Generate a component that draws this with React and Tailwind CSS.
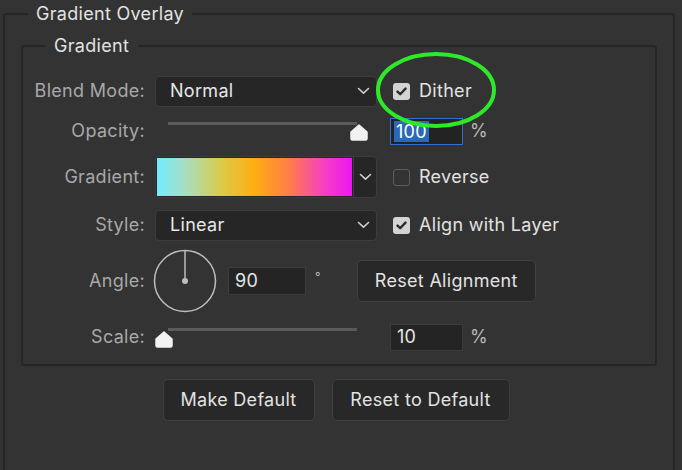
import React from "react";

const Chevron = () => (
  <svg width="13" height="8" viewBox="0 0 13 8" fill="none">
    <path d="M1.5 1.5 L6.5 6.2 L11.5 1.5" stroke="#cfcfcf" strokeWidth="1.6" strokeLinecap="round" strokeLinejoin="round" />
  </svg>
);

const Check = ({ checked }) =>
  checked ? (
    <span className="flex h-[17px] w-[17px] items-center justify-center rounded-[3px] bg-[#d4d4d4]">
      <svg width="11" height="9" viewBox="0 0 11 9" fill="none">
        <path d="M1.5 4.6 L4.2 7.2 L9.5 1.6" stroke="#2e2e2e" strokeWidth="2.4" strokeLinecap="round" strokeLinejoin="round" />
      </svg>
    </span>
  ) : (
    <span className="block h-[17px] w-[17px] rounded-[3px] border-[1.5px] border-[#5e5e5e]" />
  );

const Handle = () => (
  <svg width="18" height="17" viewBox="0 0 18 17">
    <path d="M9 1 L17 8 L17 14.5 Q17 16 15.5 16 L2.5 16 Q1 16 1 14.5 L1 8 Z" fill="#f2f2f2" stroke="#f2f2f2" strokeWidth="1.5" strokeLinejoin="round" />
  </svg>
);

const Select = ({ value }) => (
  <div className="flex h-[31px] w-[222px] items-center justify-between rounded-[4px] border border-[#3d3d3d] bg-[#262626] pl-[14px] pr-[6px] text-[#e6e6e6]">
    <span>{value}</span>
    <Chevron />
  </div>
);

const Row = ({ label, h, children }) => (
  <div className="flex items-center" style={{ height: h }}>
    <span className="w-[122px] text-right text-[#a8a8a8]">{label}</span>
    <div className="ml-[10px] flex items-center">{children}</div>
  </div>
);

const Button = ({ children, className = "" }) => (
  <div className={`flex h-[42px] items-center justify-center rounded-[5px] border-[1.5px] border-[#404040] bg-[#282828] text-[#e2e2e2] ${className}`}>
    {children}
  </div>
);

export default function App() {
  return (
    <div className="relative h-[470px] w-[682px] overflow-hidden bg-[#333333] font-['Inter','Liberation_Sans',sans-serif] text-[18px] leading-[20px] tracking-[0.3px]">
      <fieldset className="ml-[3px] mt-[4px] w-[672px] rounded-[3px] border-2 border-[#262626] pb-[60px]">
        <legend className="ml-[23px] px-2 text-[#e2e2e2]">Gradient Overlay</legend>

        <fieldset className="mx-4 mt-3 rounded-[3px] border-2 border-[#262626] pb-[5px] pt-[15px]">
          <legend className="ml-[22px] px-[9px] text-[#e2e2e2]">Gradient</legend>

          <Row label="Blend Mode:" h={40}>
            <Select value="Normal" />
            <span className="ml-4"><Check checked /></span>
            <span className="ml-[9px] text-[#e2e2e2]">Dither</span>
          </Row>

          <Row label="Opacity:" h={40}>
            <div className="relative h-[40px] w-[222px]">
              <div className="ml-[13px] mt-[11px] h-[3px] w-[189px] bg-[#5a5a5a]" />
              <div className="absolute left-[195px] top-[13px]"><Handle /></div>
            </div>
            <div className="ml-[13px] flex h-[27px] w-[73px] items-center border-[1.5px] border-[#2f6fd3] bg-[#232323] pl-[3px]">
              <span className="bg-[#2b68b5] px-[2px] leading-[21px] text-white">100</span>
            </div>
            <span className="ml-[7px] text-[#b8b8b8]">%</span>
          </Row>

          <Row label="Gradient:" h={52}>
            <div className="flex h-[42px] w-[222px] overflow-hidden rounded-[4px] border border-[#3d3d3d] bg-[#262626]">
              <div className="m-[1px] w-[195px] bg-[linear-gradient(to_right,#74ebff_0%,#a6dfc4_14%,#dccb48_33%,#ffad12_50%,#ff7c4a_68%,#f63ec4_86%,#ec16f2_100%)]" />
              <div className="flex flex-1 items-center justify-center border-l border-[#3d3d3d]">
                <Chevron />
              </div>
            </div>
            <span className="ml-4"><Check /></span>
            <span className="ml-[9px] text-[#e2e2e2]">Reverse</span>
          </Row>

          <Row label="Style:" h={44}>
            <Select value="Linear" />
            <span className="ml-4"><Check checked /></span>
            <span className="ml-[9px] text-[#e2e2e2]">Align with Layer</span>
          </Row>

          <Row label="Angle:" h={68}>
            <svg width="64" height="64" viewBox="0 0 64 64" className="-ml-[2px]">
              <circle cx="32" cy="32" r="30.5" fill="none" stroke="#bdbdbd" strokeWidth="1.5" />
              <line x1="32" y1="2" x2="32" y2="32" stroke="#bdbdbd" strokeWidth="1.5" />
              <circle cx="32" cy="32" r="3" fill="#bdbdbd" />
            </svg>
            <div className="ml-[11px] flex h-[28px] w-[78px] items-center border border-[#3c3c3c] bg-[#242424] pl-[6px] text-[#e6e6e6]">90</div>
            <span className="ml-[9px] -mt-[8px] text-[12px] text-[#b8b8b8]">°</span>
            <Button className="ml-[36px] w-[179px]">Reset Alignment</Button>
          </Row>

          <Row label="Scale:" h={44}>
            <div className="relative h-[44px] w-[222px]">
              <div className="ml-[13px] mt-[13px] h-[3px] w-[189px] bg-[#5a5a5a]" />
              <div className="absolute left-0 top-[16px]"><Handle /></div>
            </div>
            <div className="ml-[13px] flex h-[27px] w-[73px] items-center border border-[#3c3c3c] bg-[#242424] pl-[6px] text-[#e6e6e6]">10</div>
            <span className="ml-[7px] text-[#b8b8b8]">%</span>
          </Row>
        </fieldset>

        <div className="mt-[13px] flex justify-center gap-[17px] pr-[6px]">
          <Button className="w-[152px]">Make Default</Button>
          <Button className="w-[178px]">Reset to Default</Button>
        </div>
      </fieldset>

      <svg className="pointer-events-none absolute left-[374px] top-[50px]" width="124" height="80" viewBox="0 0 124 80">
        <ellipse cx="62" cy="40" rx="58" ry="36" fill="none" stroke="#2fe82a" strokeWidth="4" />
      </svg>
    </div>
  );
}
